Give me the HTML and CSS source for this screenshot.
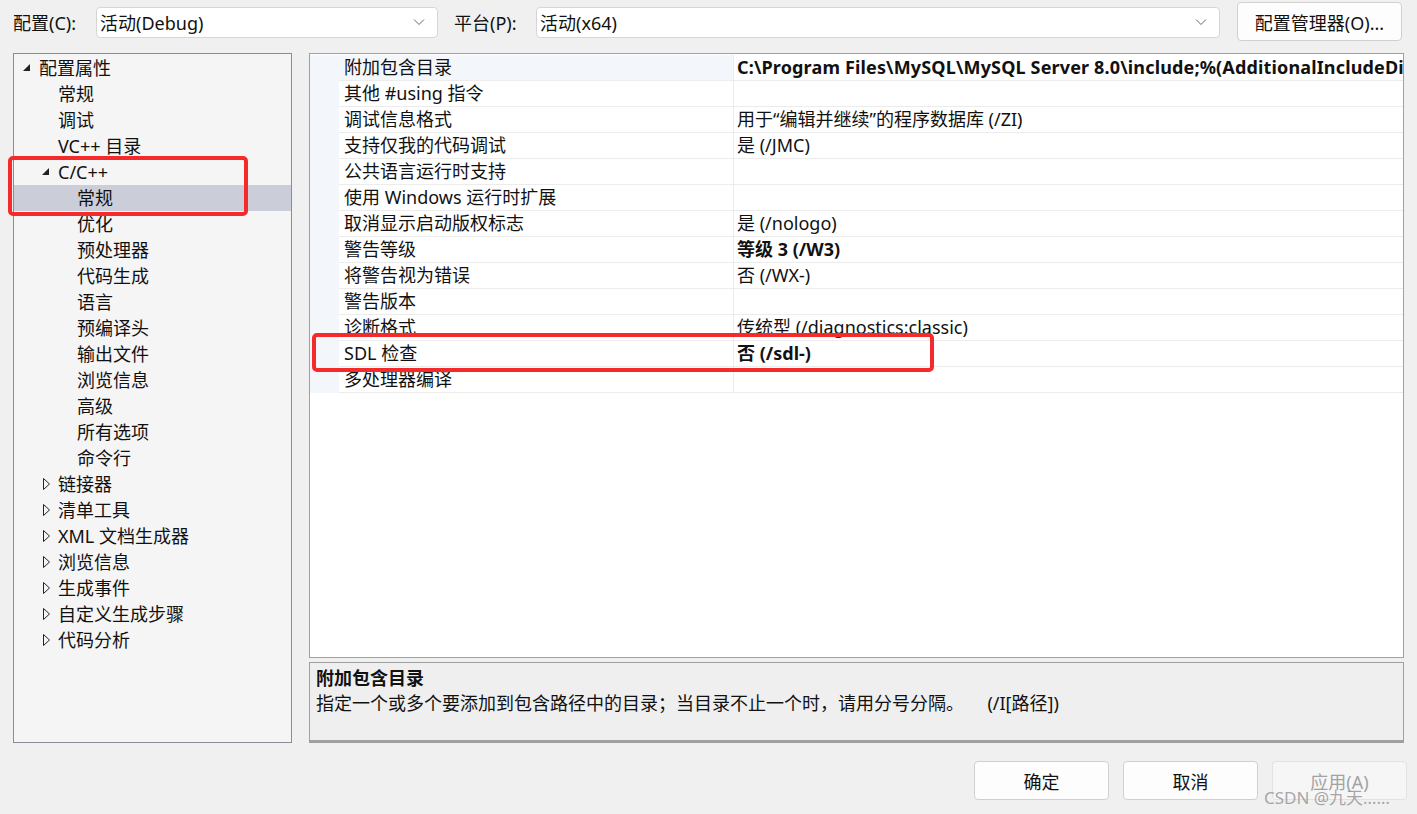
FILE: index.html
```html
<!DOCTYPE html>
<html lang="zh-CN">
<head>
  <meta charset="UTF-8" />
  <title>属性页</title>
  <link rel="stylesheet" href="styles.css">
</head>
<body>
  <div class="dialog">
    <div class="toolbar">
      <label class="tb-label tb-config">配置(C):</label>
      <div class="combo combo-config">
        <span>活动(Debug)</span>
        <svg class="chev" width="12" height="8" viewBox="0 0 12 8"><path d="M1 1.5 L6 6.5 L11 1.5" fill="none" stroke="#666" stroke-width="1"/></svg>
      </div>
      <label class="tb-label tb-platform">平台(P):</label>
      <div class="combo combo-platform">
        <span>活动(x64)</span>
        <svg class="chev" width="12" height="8" viewBox="0 0 12 8"><path d="M1 1.5 L6 6.5 L11 1.5" fill="none" stroke="#666" stroke-width="1"/></svg>
      </div>
      <button class="btn btn-manager">配置管理器(O)...</button>
    </div>

    <div class="body-area">
      <!-- left tree -->
      <div class="tree">
        <div class="node lv0"><span class="twist"><svg width="9" height="9" viewBox="0 0 9 9"><path d="M8 1 L8 8 L1 8 Z" fill="#222"/></svg></span>配置属性</div>
        <div class="node lv1"><span class="twist"></span>常规</div>
        <div class="node lv1"><span class="twist"></span>调试</div>
        <div class="node lv1"><span class="twist"></span>VC++ 目录</div>
        <div class="node lv1"><span class="twist"><svg width="9" height="9" viewBox="0 0 9 9"><path d="M8 1 L8 8 L1 8 Z" fill="#222"/></svg></span>C/C++</div>
        <div class="node lv2 selected"><span class="twist"></span>常规</div>
        <div class="node lv2"><span class="twist"></span>优化</div>
        <div class="node lv2"><span class="twist"></span>预处理器</div>
        <div class="node lv2"><span class="twist"></span>代码生成</div>
        <div class="node lv2"><span class="twist"></span>语言</div>
        <div class="node lv2"><span class="twist"></span>预编译头</div>
        <div class="node lv2"><span class="twist"></span>输出文件</div>
        <div class="node lv2"><span class="twist"></span>浏览信息</div>
        <div class="node lv2"><span class="twist"></span>高级</div>
        <div class="node lv2"><span class="twist"></span>所有选项</div>
        <div class="node lv2"><span class="twist"></span>命令行</div>
        <div class="node lv1"><span class="twist closed"><svg width="9" height="14" viewBox="0 0 9 14"><path d="M1.5 1.5 L7.5 7 L1.5 12.5 Z" fill="none" stroke="#222" stroke-width="1"/></svg></span>链接器</div>
        <div class="node lv1"><span class="twist closed"><svg width="9" height="14" viewBox="0 0 9 14"><path d="M1.5 1.5 L7.5 7 L1.5 12.5 Z" fill="none" stroke="#222" stroke-width="1"/></svg></span>清单工具</div>
        <div class="node lv1"><span class="twist closed"><svg width="9" height="14" viewBox="0 0 9 14"><path d="M1.5 1.5 L7.5 7 L1.5 12.5 Z" fill="none" stroke="#222" stroke-width="1"/></svg></span>XML 文档生成器</div>
        <div class="node lv1"><span class="twist closed"><svg width="9" height="14" viewBox="0 0 9 14"><path d="M1.5 1.5 L7.5 7 L1.5 12.5 Z" fill="none" stroke="#222" stroke-width="1"/></svg></span>浏览信息</div>
        <div class="node lv1"><span class="twist closed"><svg width="9" height="14" viewBox="0 0 9 14"><path d="M1.5 1.5 L7.5 7 L1.5 12.5 Z" fill="none" stroke="#222" stroke-width="1"/></svg></span>生成事件</div>
        <div class="node lv1"><span class="twist closed"><svg width="9" height="14" viewBox="0 0 9 14"><path d="M1.5 1.5 L7.5 7 L1.5 12.5 Z" fill="none" stroke="#222" stroke-width="1"/></svg></span>自定义生成步骤</div>
        <div class="node lv1"><span class="twist closed"><svg width="9" height="14" viewBox="0 0 9 14"><path d="M1.5 1.5 L7.5 7 L1.5 12.5 Z" fill="none" stroke="#222" stroke-width="1"/></svg></span>代码分析</div>
      </div>

      <!-- property grid + description -->
      <div class="right-col">
        <div class="grid">
          <div class="prow current"><div class="gutter"></div><div class="pname">附加包含目录</div><div class="pval bold path">C:\Program Files\MySQL\MySQL Server 8.0\include;%(AdditionalIncludeDirectories)</div></div>
          <div class="prow"><div class="gutter"></div><div class="pname">其他 #using 指令</div><div class="pval"></div></div>
          <div class="prow"><div class="gutter"></div><div class="pname">调试信息格式</div><div class="pval">用于“编辑并继续”的程序数据库 (/ZI)</div></div>
          <div class="prow"><div class="gutter"></div><div class="pname">支持仅我的代码调试</div><div class="pval">是 (/JMC)</div></div>
          <div class="prow"><div class="gutter"></div><div class="pname">公共语言运行时支持</div><div class="pval"></div></div>
          <div class="prow"><div class="gutter"></div><div class="pname">使用 Windows 运行时扩展</div><div class="pval"></div></div>
          <div class="prow"><div class="gutter"></div><div class="pname">取消显示启动版权标志</div><div class="pval">是 (/nologo)</div></div>
          <div class="prow"><div class="gutter"></div><div class="pname">警告等级</div><div class="pval bold">等级 3 (/W3)</div></div>
          <div class="prow"><div class="gutter"></div><div class="pname">将警告视为错误</div><div class="pval">否 (/WX-)</div></div>
          <div class="prow"><div class="gutter"></div><div class="pname">警告版本</div><div class="pval"></div></div>
          <div class="prow"><div class="gutter"></div><div class="pname">诊断格式</div><div class="pval">传统型 (/diagnostics:classic)</div></div>
          <div class="prow"><div class="gutter"></div><div class="pname">SDL 检查</div><div class="pval bold">否 (/sdl-)</div></div>
          <div class="prow"><div class="gutter"></div><div class="pname">多处理器编译</div><div class="pval"></div></div>
        </div>
        <div class="desc">
          <div class="desc-title">附加包含目录</div>
          <div class="desc-text">指定一个或多个要添加到包含路径中的目录；当目录不止一个时，请用分号分隔。&nbsp;&nbsp;&nbsp;&nbsp;&nbsp;(/I[路径])</div>
        </div>
      </div>
    </div>

    <div class="actions">
      <button class="btn btn-act">确定</button>
      <button class="btn btn-act">取消</button>
      <button class="btn btn-act disabled">应用(A)</button>
    </div>
  </div>

  <!-- highlight marks -->
  <div class="mark mark-tree"></div>
  <div class="mark mark-sdl"></div>
  <div class="watermark">CSDN @九天……</div>
</body>
</html>
```

FILE: styles.css
```css
html, body {
  margin: 0;
  height: 100%;
}

body {
  background: #f0f0f0;
  font-family: "Noto Sans", "Noto Sans CJK SC", sans-serif;
  font-size: 18px;
  color: #111;
  position: relative;
  overflow: hidden;
}

.dialog { display: flex; flex-direction: column; }

/* top bar */
.toolbar { height: 43px; display: flex; align-items: center; padding-left: 13px; }
.tb-label { white-space: nowrap; flex: none; }
.tb-config { width: 83px; }
.tb-platform { margin-left: 16px; width: 82px; }
.combo { height: 29px; background: #fff; border: 1px solid #d6d6d6; border-radius: 4px; display: flex; align-items: center; justify-content: space-between; padding: 0 12px 0 3px; box-sizing: content-box; flex: none; }
.combo-config { width: 325px; margin-top: 1px; }
.combo-platform { width: 667px; margin-top: 1px; }
.chev { flex: none; }

.btn { font-family: inherit; font-size: 18px; color: #111; background: #fdfdfd; border: 1px solid #d0d0d0; border-radius: 4px; padding: 0; cursor: pointer; }
.btn-manager { width: 165px; height: 39px; margin-left: 17px; flex: none; }

/* middle */
.body-area { display: flex; margin-top: 10px; height: 690px; }

.tree { width: 277px; margin-left: 13px; border: 1px solid #8c8c96; background: #f5f5f5; padding-top: 1px; height: 687px; }
.node { height: 26px; line-height: 26px; display: flex; align-items: center; white-space: nowrap; }
.node.lv0 { padding-left: 8px; }
.node.lv1 { padding-left: 27px; }
.node.lv2 { padding-left: 46px; }
.node.selected { background: #cbcdd9; }
.twist { width: 17px; flex: none; display: flex; align-items: center; }
.twist svg { margin-top: -2px; }
.twist.closed svg { margin-left: 1px; margin-top: 0; }

.right-col { margin-left: 17px; width: 1095px; display: flex; flex-direction: column; gap: 4px; }

.grid { height: 605px; border: 1px solid #a0a0a0; background: #fff; padding-top: 1px; overflow: hidden; }
.prow { display: flex; height: 26px; }
.gutter { width: 29px; flex: none; background: #f3f6fa; }
.pname { width: 389px; flex: none; padding-left: 5px; line-height: 25px; border-right: 1px solid #ececec; border-bottom: 1px solid #ececec; white-space: nowrap; overflow: hidden; }
.pval { flex: 1; padding-left: 3px; line-height: 25px; border-bottom: 1px solid #ececec; white-space: nowrap; overflow: hidden; }
.pval.path { letter-spacing: 0.15px; }
.prow.current .pname { background: #f3f6fa; }
.bold { font-weight: 700; }

.desc { height: 74px; border: 1px solid #a0a0a0; border-bottom-width: 3px; background: #efefef; padding: 3px 0 0 6px; }
.desc-title { font-weight: 700; line-height: 25px; }
.desc-text { line-height: 25px; white-space: nowrap; }

/* bottom buttons */
.actions { display: flex; justify-content: flex-end; gap: 14px; padding-right: 10px; margin-top: 18px; }
.btn-act { width: 135px; height: 39px; }
.btn-act.disabled { color: #a2a2a2; background: #f6f6f6; border-color: #e2e2e2; }

/* red outlines over the dialog */
.mark { position: absolute; border: 4px solid #f52a2a; border-radius: 5px; }
.mark-tree { left: 8px; top: 156px; width: 232px; height: 52px; }
.mark-sdl { left: 312px; top: 333px; width: 614px; height: 31px; }

.watermark { position: absolute; left: 1264px; top: 784px; font-size: 17px; color: rgba(140, 140, 140, 0.75); white-space: nowrap; }
```
